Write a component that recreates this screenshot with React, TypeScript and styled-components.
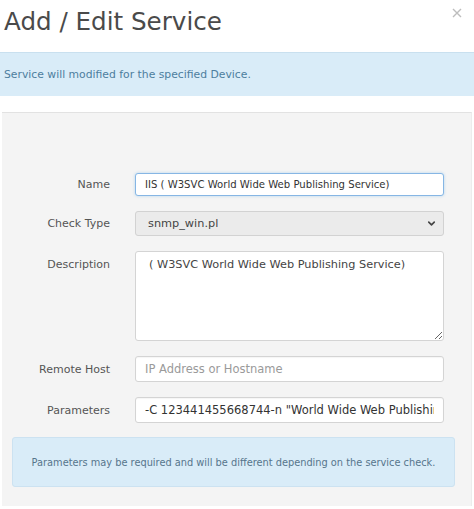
import React from 'react';
import styled, { createGlobalStyle } from 'styled-components';
import { ChevronDown } from 'lucide-react';

const GlobalStyle = createGlobalStyle`
  html, body {
    margin: 0;
    padding: 0;
    background: #ffffff;
  }
  body {
    font-family: "DejaVu Sans", Verdana, sans-serif;
    color: #555;
  }
  * {
    box-sizing: border-box;
  }
`;

const Modal = styled.div`
  width: 474px;
  height: 509px;
  display: flex;
  flex-direction: column;
  background: #ffffff;
`;

const Header = styled.header`
  position: relative;
  height: 52px;
  padding: 6px 4px 0;
`;

const Title = styled.h1`
  margin: 0;
  font-size: 24.6px;
  font-weight: normal;
  line-height: 32px;
  color: #4a4a4a;
`;

const Close = styled.button`
  position: absolute;
  top: 6px;
  right: 10px;
  width: 14px;
  height: 14px;
  padding: 0;
  border: none;
  background: none;
  display: flex;
  align-items: center;
  justify-content: center;
`;

const Alert = styled.div`
  height: 44px;
  display: flex;
  align-items: center;
  padding: 0 4px;
  background: #d9ecf8;
  border-top: 1px solid #c9e0ef;
  font-size: 10.8px;
  color: #4d7e9e;
`;

const Well = styled.section`
  margin: 16px 2px 3px;
  flex: 1;
  display: flex;
  flex-direction: column;
  gap: 15px;
  padding: 60px 16px 18px 10px;
  background: #f4f4f4;
  border-top: 1px solid #e2e2e2;
  border-right: 1px solid #ececec;
`;

const Row = styled.div<{ $top?: boolean }>`
  display: grid;
  grid-template-columns: 98px 309px;
  column-gap: 25px;
  align-items: ${(p) => (p.$top ? 'start' : 'center')};
`;

const Label = styled.label<{ $top?: boolean }>`
  text-align: right;
  font-size: 11px;
  color: #555;
  padding-top: ${(p) => (p.$top ? '7px' : '0')};
`;

const Input = styled.input<{ $focus?: boolean }>`
  width: 100%;
  height: ${(p) => (p.$focus ? '23px' : '26px')};
  padding: 0 9px;
  font-family: "DejaVu Sans", Verdana, sans-serif;
  font-size: ${(p) => (p.$focus ? '10.1px' : '11.5px')};
  color: #333;
  background: #fff;
  border: 1px solid ${(p) => (p.$focus ? '#86b6e4' : '#d4d4d4')};
  border-radius: 3px;
  box-shadow: ${(p) =>
    p.$focus ? '0 0 3px rgba(102,175,233,0.45)' : 'inset 0 1px 1px rgba(0,0,0,0.04)'};
  outline: none;
  &::placeholder {
    color: #9a9a9a;
  }
`;

const SelectWrap = styled.div`
  position: relative;
  height: 25px;
`;

const Select = styled.select`
  width: 100%;
  height: 100%;
  appearance: none;
  padding: 0 12px;
  font-family: "DejaVu Sans", Verdana, sans-serif;
  font-size: 11.3px;
  color: #444;
  background: #ebebeb;
  border: 1px solid #d2d2d2;
  border-radius: 3px;
  outline: none;
`;

const Caret = styled.span`
  position: absolute;
  right: 7px;
  top: 7px;
  display: flex;
  pointer-events: none;
  color: #444;
`;

const TextArea = styled.textarea`
  width: 100%;
  height: 90px;
  padding: 6px 13px;
  font-family: "DejaVu Sans", Verdana, sans-serif;
  font-size: 11.3px;
  color: #444;
  background: #fff;
  border: 1px solid #d4d4d4;
  border-radius: 3px;
  outline: none;
  resize: vertical;
`;

const Note = styled.div`
  height: 50px;
  margin-top: -1px;
  display: flex;
  align-items: center;
  justify-content: center;
  background: #d9ecf8;
  border: 1px solid #cce2f1;
  border-radius: 3px;
  font-size: 9.8px;
  color: #56758c;
`;

const App: React.FC = () => {
  return (
    <>
      <GlobalStyle />
      <Modal>
        <Header>
          <Title>Add / Edit Service</Title>
          <Close aria-label="Close">
            <svg width="10" height="10" viewBox="0 0 10 10">
              <path d="M1 1L9 9M9 1L1 9" stroke="#bdbdbd" strokeWidth="1.4" />
            </svg>
          </Close>
        </Header>

        <Alert>Service will modified for the specified Device.</Alert>

        <Well>
          <Row>
            <Label>Name</Label>
            <Input $focus defaultValue="IIS ( W3SVC World Wide Web Publishing Service)" />
          </Row>
          <Row>
            <Label>Check Type</Label>
            <SelectWrap>
              <Select defaultValue="snmp_win.pl">
                <option value="snmp_win.pl">snmp_win.pl</option>
              </Select>
              <Caret>
                <ChevronDown size={11} strokeWidth={3.5} />
              </Caret>
            </SelectWrap>
          </Row>
          <Row $top>
            <Label $top>Description</Label>
            <TextArea defaultValue="( W3SVC World Wide Web Publishing Service)" />
          </Row>
          <Row>
            <Label>Remote Host</Label>
            <Input placeholder="IP Address or Hostname" />
          </Row>
          <Row>
            <Label>Parameters</Label>
            <Input defaultValue={'-C 123441455668744-n "World Wide Web Publishing Service"'} />
          </Row>
          <Note>Parameters may be required and will be different depending on the service check.</Note>
        </Well>
      </Modal>
    </>
  );
};

export default App;
